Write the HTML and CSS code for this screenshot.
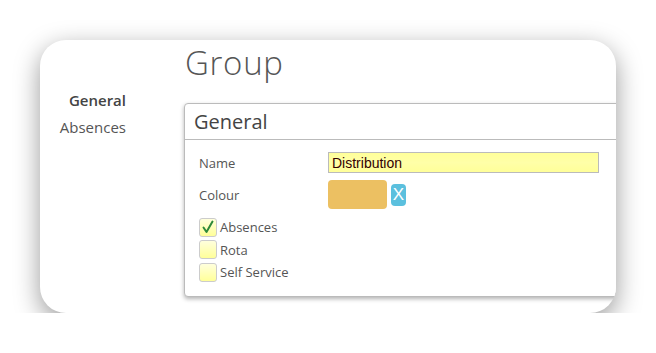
FILE: index.html
```html
<!DOCTYPE html>
<html lang="en">
<head>
    <meta charset="UTF-8">
    <meta name="viewport" content="width=device-width, initial-scale=1.0">
    <title>Group</title>
    <link rel="stylesheet" href="styles.css">
</head>
<body>

<div class="window">
    <ul class="side-nav">
        <li class="active">General</li>
        <li>Absences</li>
    </ul>

    <div class="main">
        <h1>Group</h1>

        <div class="panel">
            <div class="panel-head">General</div>
            <div class="panel-body">
                <div class="row">
                    <label class="label">Name</label>
                    <input class="text-input" type="text" value="Distribution">
                </div>
                <div class="row colour-row">
                    <span class="label">Colour</span>
                    <span class="swatch"></span>
                    <span class="clear-btn">X</span>
                </div>
                <!-- options -->
                <div class="check-row">
                    <span class="check">
                        <svg width="14" height="14" viewBox="0 0 14 14"><path d="M2.5 7.5 L5.5 12 L11.5 1.5" fill="none" stroke="#2f8a3a" stroke-width="2" stroke-linecap="round" stroke-linejoin="round"/></svg>
                    </span>
                    Absences
                </div>
                <div class="check-row">
                    <span class="check"></span>
                    Rota
                </div>
                <div class="check-row">
                    <span class="check"></span>
                    Self Service
                </div>
            </div>
        </div>
    </div>
</div>

</body>
</html>
```

FILE: styles.css
```css
body {
    margin: 0;
    background-color: #fff;
    font-family: "Open Sans", Arial, sans-serif;
    color: #555;
    padding: 40px 0 0 40px;
}

.window {
    width: 576px;
    height: 273px;
    background-color: #fff;
    border-radius: 26px;
    box-shadow: 0 8px 26px rgba(0, 0, 0, 0.4);
    overflow: hidden;
    display: grid;
    grid-template-columns: 144px 1fr;
}

.side-nav {
    list-style: none;
    margin: 0;
    padding: 47px 58px 0 0;
    text-align: right;
    font-size: 15px;
}

.side-nav li {
    line-height: 27px;
    color: #555;
}

.side-nav li.active {
    font-weight: 600;
    color: #444;
}

h1 {
    margin: 0 0 17px 1px;
    font-size: 33px;
    font-weight: 300;
    line-height: 46px;
    letter-spacing: 0.7px;
    color: #555;
}

.panel {
    width: 470px;
    border: 1px solid #bbb;
    border-radius: 4px;
    box-shadow: 0 2px 4px rgba(0, 0, 0, 0.3);
    background-color: #fff;
}

.panel-head {
    height: 35px;
    line-height: 35px;
    padding-left: 9px;
    font-size: 20px;
    font-weight: 500;
    color: #444;
    border-bottom: 1px solid #bbb;
}

.panel-body {
    padding: 12px 14px 12px 14px;
}

.row {
    display: flex;
    align-items: center;
    margin-bottom: 7px;
}

.label {
    width: 129px;
    font-size: 13px;
    color: #555;
}

.text-input {
    width: 263px;
    height: 17px;
    margin: 0;
    padding: 1px 3px;
    border: 1px solid #bbb;
    background: linear-gradient(#ffff99, #ffffa8 50%, #ffff99);
    font-family: Arial, sans-serif;
    font-size: 14px;
    color: #300;
}

.swatch {
    width: 59px;
    height: 29px;
    border-radius: 4px;
    background-color: #ecc062;
}

.clear-btn {
    width: 15px;
    height: 22px;
    margin-left: 4px;
    border-radius: 4px;
    background-color: #5bc0de;
    color: #fff;
    font-family: Arial, sans-serif;
    font-size: 17px;
    line-height: 22px;
    text-align: center;
}

.check-row {
    display: flex;
    align-items: center;
    height: 22.5px;
    font-size: 13px;
    color: #555;
}

.check {
    width: 16px;
    height: 17px;
    margin-right: 3px;
    border: 1px solid #ccc;
    border-radius: 3px;
    background: linear-gradient(#ffffdd, #ffff99);
    display: flex;
    align-items: center;
    justify-content: center;
}
```
